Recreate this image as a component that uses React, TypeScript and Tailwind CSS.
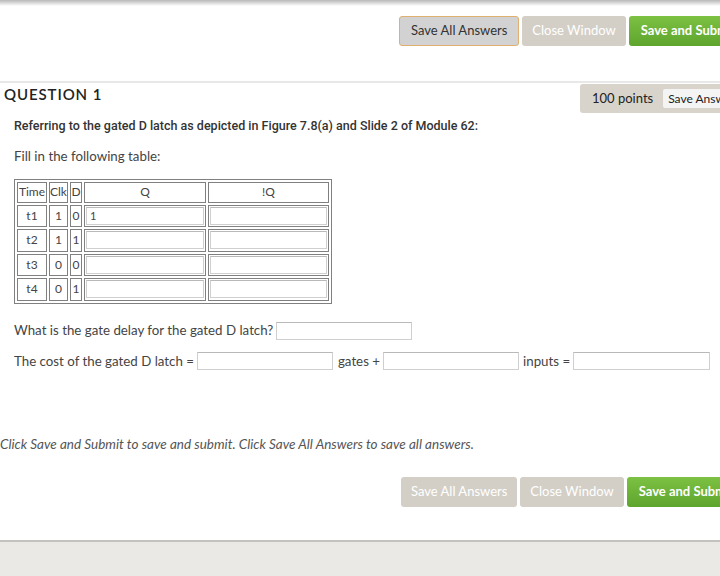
import React from "react";

const rows = [
  { t: "t1", clk: "1", d: "0", q: "1" },
  { t: "t2", clk: "1", d: "1", q: "" },
  { t: "t3", clk: "0", d: "0", q: "" },
  { t: "t4", clk: "0", d: "1", q: "" },
];

function Buttons({ disabled }: { disabled?: boolean }) {
  return (
    <div className="flex gap-[3px] h-[30px] w-[360px]">
      <button
        className={`rounded-[3px] text-[13px] ${
          disabled
            ? "px-[10px] bg-[#d3cfc7] text-white"
            : "px-[11px] bg-[#d2d2d2] text-[#333] border border-[#e0b070]"
        }`}
      >
        Save All Answers
      </button>
      <button className="px-[10px] rounded-[3px] text-[13px] bg-[#d3cfc7] text-white">Close Window</button>
      <button className="px-[12px] rounded-[3px] text-[13px] font-bold text-white bg-gradient-to-b from-[#7cc142] to-[#5ea52e] whitespace-nowrap">
        Save and Submit
      </button>
    </div>
  );
}

function Field({ w, value }: { w: string; value?: string }) {
  return (
    <input
      readOnly
      value={value ?? ""}
      className={`${w} h-[18px] border border-[#cfcfcf] border-t-[#b9b9b9] bg-white text-[11px] px-[3px] outline-none`}
    />
  );
}

export default function App() {
  return (
    <div className="w-[720px] h-[576px] overflow-hidden bg-white flex flex-col text-[#333]" style={{ fontFamily: "Lato, 'Open Sans', sans-serif" }}>
      <div className="h-[6px] bg-gradient-to-b from-[#b8b8b8] to-white shrink-0" />

      <div className="ml-[399px] mt-[10px]">
        <Buttons />
      </div>

      <div className="mt-[35px] border-t-2 border-[#e8e8e8] flex justify-between items-start">
        <div className="pl-[4px] pt-0 text-[15px] font-semibold tracking-[0.06em] text-[#222]">QUESTION 1</div>
        <div className="mt-[1px] h-[29px] w-[140px] bg-[#d8d4cc] rounded-l-[3px] flex items-center pl-[12px] gap-[10px] text-[13px] text-[#222] whitespace-nowrap">
          <span>100 points</span>
          <span className="bg-[#f4f4f4] h-[19px] px-[5px] text-[12px] rounded-[2px] flex items-center">Save Answers</span>
        </div>
      </div>

      <div className="pl-[14px]">
        <p className="mt-[4px] text-[12.5px] font-medium text-[#333]" style={{ fontFamily: "Roboto, sans-serif" }}>
          Referring to the gated D latch as depicted in Figure 7.8(a) and Slide 2 of Module 62:
        </p>
        <p className="mt-[11px] text-[13.3px] text-[#444]">Fill in the following table:</p>

        <table className="mt-[12px] border border-[#808080] border-separate border-spacing-[2px] text-[12px] text-[#444]">
          <thead>
            <tr className="h-[21px]">
              <th className="font-normal border border-[#808080] w-[30px] px-0">Time</th>
              <th className="font-normal border border-[#808080] w-[19px] px-0">Clk</th>
              <th className="font-normal border border-[#808080] w-[12px] px-0">D</th>
              <th className="font-normal border border-[#808080] w-[122px]">Q</th>
              <th className="font-normal border border-[#808080] w-[121px]">!Q</th>
            </tr>
          </thead>
          <tbody>
            {rows.map((r) => (
              <tr key={r.t} className="h-[22px]">
                <td className="border border-[#808080] text-center">{r.t}</td>
                <td className="border border-[#808080] text-center">{r.clk}</td>
                <td className="border border-[#808080] text-center">{r.d}</td>
                <td className="border border-[#808080] p-[1px]">
                  <Field w="w-[118px]" value={r.q} />
                </td>
                <td className="border border-[#808080] p-[1px]">
                  <Field w="w-[117px]" />
                </td>
              </tr>
            ))}
          </tbody>
        </table>

        <div className="mt-[17px] flex items-center gap-[3px] text-[13.3px] text-[#444]">
          <span>What is the gate delay for the gated D latch?</span>
          <Field w="w-[136px]" />
        </div>
        <div className="mt-[11px] flex items-center text-[13.3px] text-[#444] whitespace-nowrap">
          <span>The cost of the gated D latch =</span>
          <span className="ml-[3px]"><Field w="w-[136px]" /></span>
          <span className="ml-[5px]">gates +</span>
          <span className="ml-[3px]"><Field w="w-[136px]" /></span>
          <span className="ml-[4px]">inputs =</span>
          <span className="ml-[3px]"><Field w="w-[137px]" /></span>
        </div>
      </div>

      <p className="mt-[62px] text-[13.5px] italic text-[#555]">
        Click Save and Submit to save and submit. Click Save All Answers to save all answers.
      </p>

      <div className="ml-[401px] mt-[23px]">
        <Buttons disabled />
      </div>

      <div className="mt-[33px] flex-1 border-t-2 border-[#c4c2be] bg-[#ebe9e5]" />
    </div>
  );
}
